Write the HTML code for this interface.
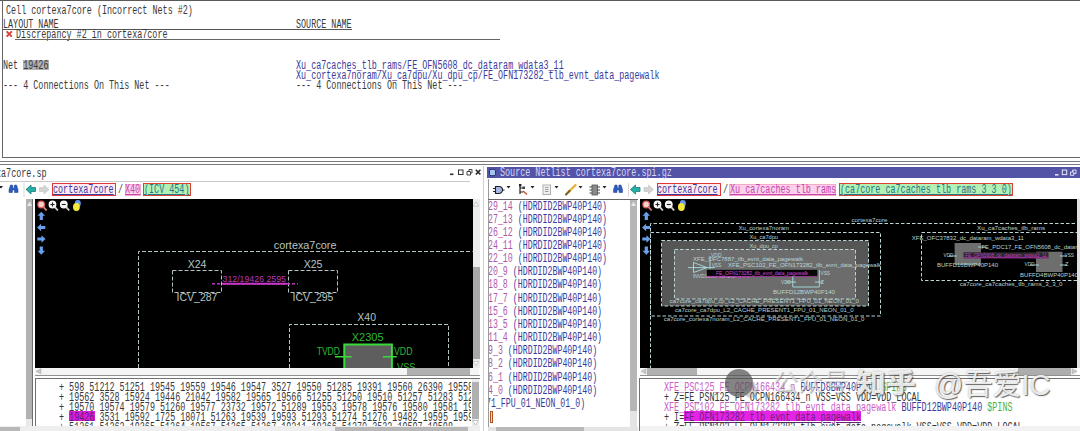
<!DOCTYPE html>
<html><head><meta charset="utf-8"><title>LVS debug</title>
<style>
html,body{margin:0;padding:0;background:#fff;}
#root{position:relative;width:1080px;height:431px;overflow:hidden;background:#fff;font-family:"Liberation Mono",monospace;}
.a{position:absolute;}
.t{position:absolute;white-space:pre;font:12px/12px "Liberation Mono",monospace;transform:scaleX(0.7014);transform-origin:0 0;color:#383838;}
.u{text-decoration:underline;}
.bl{color:#3a3a9c;}
.mg{color:#b058a8;}
.pk{color:#c860c8;}
.gn{color:#48b448;}
.ls{font-size:12.5px;transform:scaleX(0.661);}
.clip{position:absolute;overflow:hidden;}
svg{position:absolute;left:0;top:0;}
svg text{font-family:"Liberation Sans",sans-serif;}
</style></head><body>
<div id="root">
<div class="a" style="left:0px;top:0px;width:1080px;height:1px;background:#5a5a5a;"></div>
<div class="a" style="left:2px;top:0px;width:1px;height:158px;background:#666;"></div>
<div class="a" style="left:2px;top:157px;width:1078px;height:1px;background:#666;"></div>
<div class="a" style="left:0px;top:161px;width:1080px;height:1px;background:#7a7a7a;"></div>
<div class="a" style="left:0px;top:164px;width:1080px;height:1px;background:#7a7a7a;"></div>
<div class="t" style="left:6px;top:5px;">Cell cortexa7core (Incorrect Nets #2)</div>
<div class="t" style="left:3px;top:19px;">LAYOUT NAME</div>
<div class="t" style="left:296px;top:19px;">SOURCE NAME</div>
<div class="a" style="left:3px;top:28.5px;width:349px;height:1.2px;background:#555;"></div>
<div class="t" style="left:16px;top:29px;">Discrepancy #2 in cortexa7core</div>
<div class="a" style="left:15px;top:38.6px;width:485px;height:1.2px;background:#666;"></div>
<svg width="1080" height="431" viewBox="0 0 1080 431" style="pointer-events:none"><path d="M6.6 31.4 L11.8 36.6 M11.8 31.4 L6.6 36.6" stroke="#dc4040" stroke-width="2" fill="none"/></svg>
<div class="a" style="left:23px;top:59.5px;width:25.5px;height:10.5px;background:#b2b2b2;"></div>
<div class="t" style="left:3px;top:60px;">Net 19426</div>
<div class="t bl" style="left:296px;top:60px;">Xu_ca7caches_tlb_rams/FE_OFN5608_dc_dataram_wdata3_11</div>
<div class="t bl" style="left:296px;top:70px;">Xu_cortexa7noram/Xu_ca7dpu/Xu_dpu_cp/FE_OFN173282_tlb_evnt_data_pagewalk</div>
<div class="t" style="left:3px;top:80px;">--- 4 Connections On This Net ---</div>
<div class="t" style="left:296px;top:80px;">--- 4 Connections On This Net ---</div>
<div class="t" style="left:-4px;top:168px;">xa7core.sp</div>
<div class="a" style="left:0px;top:181px;width:470px;height:1px;background:#c8c8c8;"></div>
<svg width="1080" height="431" viewBox="0 0 1080 431">
<rect x="450" y="173.5" width="3.5" height="1.6" fill="#333"/>
<rect x="458.5" y="170" width="4.5" height="4.5" fill="none" stroke="#333" stroke-width="1"/>
<path d="M467 175 V171.5 H470.5 V175 Z M469 171.5 V169.5 H472 V173 H470.5" fill="none" stroke="#333" stroke-width="0.9"/>
<path d="M475.8 169.8 L480.4 174.6 M480.4 169.8 L475.8 174.6" stroke="#222" stroke-width="1.5" fill="none"/>
</svg>
<svg width="1080" height="431" viewBox="0 0 1080 431"><path d="M-1 186 h4 l-2 2.4 z" fill="#222"/></svg>
<svg width="1080" height="431" viewBox="0 0 1080 431">
<g transform="translate(8.5,0)">
<path d="M0.5 192.5 L0.5 189.5 L2 185 L4 185 L4.6 188.5 L5.4 188.5 L6 185 L8 185 L9.5 189.5 L9.5 192.5 L6 192.5 L6 190 L4 190 L4 192.5 Z" fill="#2c5cc0" stroke="#1c3c90" stroke-width="0.5"/>
<rect x="15" y="183" width="1" height="14" fill="#d8d8d8"/>
<path d="M17.5 189.5 L22.5 185 L22.5 187.5 L27 187.5 L27 191.5 L22.5 191.5 L22.5 194 Z" fill="#28b0a8" stroke="#187878" stroke-width="0.8"/>
<path d="M40.5 189.5 L35.5 185 L35.5 187.5 L31 187.5 L31 191.5 L35.5 191.5 L35.5 194 Z" fill="#d4d4d4" stroke="#c0c0c0" stroke-width="0.6"/>
</g></svg>
<div class="a" style="left:52px;top:183px;width:64px;height:13px;background:#ffeaf2;border:1.5px solid #e03838;box-sizing:border-box"></div>
<div class="t u" style="left:52.8px;top:184px;color:#3a3aa0">cortexa7core</div>
<div class="t" style="left:118px;top:184px;">/</div>
<div class="a" style="left:124.5px;top:184px;width:16.5px;height:11.5px;background:#ffd0ea;border:1px solid #f4a8cc;box-sizing:border-box"></div>
<div class="t u" style="left:125.0px;top:184px;color:#c048b0">X40</div>
<div class="a" style="left:143px;top:183px;width:48px;height:13px;background:#b4f0b4;border:1.5px solid #e04030;box-sizing:border-box"></div>
<div class="t u" style="left:144.2px;top:184px;color:#207888">(ICV_454)</div>
<div class="a" style="left:26px;top:199px;width:6px;height:220px;background:#b2b2b2;"></div>
<div class="a" style="left:26px;top:419px;width:6px;height:8px;background:#e8e8e8;"></div>
<div class="a" style="left:32px;top:199px;width:1px;height:228px;background:#707070;"></div>
<div class="a" style="left:35px;top:199px;width:437.5px;height:169px;background:#000;"></div>
<div class="a" style="left:472.5px;top:199px;width:7px;height:169px;background:#ececec;"></div>
<div class="a" style="left:472.5px;top:267px;width:7px;height:92px;background:#a8a8a8;"></div>
<div class="a" style="left:35px;top:368px;width:444px;height:6.5px;background:#f4f4f4;"></div>
<div class="a" style="left:407px;top:368px;width:63px;height:6.5px;background:#b0b0b0;"></div>
<div class="a" style="left:35px;top:375px;width:445px;height:1px;background:#909090;"></div>
<div class="a" style="left:35px;top:378px;width:445px;height:1px;background:#707070;"></div>
<div class="a" style="left:35px;top:378px;width:1px;height:49px;background:#707070;"></div>
<div class="a" style="left:471.5px;top:378.5px;width:7.5px;height:48px;background:#ececec;"></div>
<div class="a" style="left:471.5px;top:382px;width:7.5px;height:36.5px;background:#b0b0b0;"></div>
<div class="a" style="left:0px;top:426px;width:480px;height:5px;background:#eeeeee;"></div>
<div class="a" style="left:335px;top:427px;width:133px;height:4px;background:#b8b8b8;"></div>
<div class="a" style="left:0px;top:427px;width:20px;height:4px;background:#b8b8b8;"></div>
<svg width="1080" height="431" viewBox="0 0 1080 431">
<defs><clipPath id="cl"><rect x="35" y="199" width="437.5" height="169"/></clipPath><clipPath id="cr"><rect x="640" y="199" width="437" height="169"/></clipPath></defs>
<g clip-path="url(#cl)">
<circle cx="41.2" cy="204.5" r="3.3" fill="#f8d0d0" stroke="#e05858" stroke-width="1.2"/><path d="M43.6 207.1 L46.6 210.5" stroke="#e08080" stroke-width="1.8"/><circle cx="52.5" cy="204.5" r="3.3" fill="#f0f0f0" stroke="#ffffff" stroke-width="1.2"/><path d="M54.9 207.1 L57.9 210.5" stroke="#d8d8d8" stroke-width="1.8"/><path d="M50.5 204.5 h4 M52.5 202.5 v4" stroke="#222" stroke-width="1.1"/><circle cx="63.8" cy="204.5" r="3.3" fill="#f0f0f0" stroke="#ffffff" stroke-width="1.2"/><path d="M66.19999999999999 207.1 L69.19999999999999 210.5" stroke="#d8d8d8" stroke-width="1.8"/><path d="M61.8 204.5 h4" stroke="#222" stroke-width="1.1"/><ellipse cx="77.8" cy="203.5" rx="3" ry="3.4" fill="#6898f0"/><ellipse cx="76.4" cy="206.9" rx="3.4" ry="4" fill="#f4e838"/>
<path d="M41.3 211.8 l3.8 4 h-2.2 v4.2 h-3.2 v-4.2 h-2.2 z" fill="#6aa0ea"/><path d="M37.099999999999994 227.5 l4 -3.8 v2.2 h4.2 v3.2 h-4.2 v2.2 z" fill="#6aa0ea"/><path d="M45.5 239 l-4 -3.8 v2.2 h-4.2 v3.2 h4.2 v2.2 z" fill="#6aa0ea"/><path d="M41.3 254.7 l3.8 -4 h-2.2 v-4.2 h-3.2 v4.2 h-2.2 z" fill="#6aa0ea"/>
<text x="273.8" y="248.5" font-size="11" fill="#b4c4c4" textLength="62.7" lengthAdjust="spacingAndGlyphs">cortexa7core</text>
<path d="M138.5 380 V251.5 H473" fill="none" stroke="#b4c4c4" stroke-width="1" stroke-dasharray="4 2"/>
<rect x="172.5" y="270.5" width="49.0" height="22" fill="none" stroke="#b4c4c4" stroke-width="1" stroke-dasharray="4 2"/>
<text x="197.0" y="267.8" font-size="10.5" fill="#b4c4c4" text-anchor="middle">X24</text>
<text x="197.0" y="301.2" font-size="10.5" fill="#b4c4c4" text-anchor="middle">ICV_287</text>
<rect x="288.5" y="270.5" width="49.0" height="22" fill="none" stroke="#b4c4c4" stroke-width="1" stroke-dasharray="4 2"/>
<text x="313.0" y="267.8" font-size="10.5" fill="#b4c4c4" text-anchor="middle">X25</text>
<text x="313.0" y="301.2" font-size="10.5" fill="#b4c4c4" text-anchor="middle">ICV_295</text>
<path d="M212 283.7 H298" stroke="#c030c0" stroke-width="1.6" stroke-dasharray="3 2"/>
<path d="M222.5 283.7 H287" stroke="#c838c8" stroke-width="2"/>
<text x="222.5" y="282" font-size="9.5" fill="#b838b8" textLength="63.5" lengthAdjust="spacingAndGlyphs">312/19426 2595</text>
<text x="366.7" y="320.8" font-size="10.5" fill="#b4c4c4" text-anchor="middle">X40</text>
<path d="M289.5 380 V324.5 H448.5 V380" fill="none" stroke="#b4c4c4" stroke-width="1" stroke-dasharray="4 2"/>
<text x="367.7" y="341" font-size="11" fill="#34b834" text-anchor="middle">X2305</text>
<rect x="344.3" y="344.5" width="47.6" height="40" fill="#5e5e5e" stroke="#38dc38" stroke-width="2"/>
<path d="M335 356.8 H351.7 M383 356.8 H396.7" stroke="#38dc38" stroke-width="1.6"/>
<text x="316.7" y="354.5" font-size="10" fill="#34b834" textLength="23.3" lengthAdjust="spacingAndGlyphs">TVDD</text>
<text x="394" y="354.5" font-size="10" fill="#34b834" textLength="18.5" lengthAdjust="spacingAndGlyphs">VDD</text>
<text x="397" y="371.3" font-size="10" fill="#34b834" textLength="18.5" lengthAdjust="spacingAndGlyphs">VSS</text>
</g>
<path d="M473.5 206 l2.5 -4 l2.5 4 z" fill="#fff" stroke="#999" stroke-width="0.5"/>
<path d="M473.5 361.5 l2.5 4 l2.5 -4 z" fill="#fff" stroke="#999" stroke-width="0.5"/>
<path d="M27 206 l2.5 -4.5 l2.5 4.5 z" fill="#e8e8e8"/>
<path d="M27 421.5 l2.5 4.5 l2.5 -4.5 z" fill="#e8e8e8"/>
<path d="M41 368.7 l-5 2.6 l5 2.6 z" fill="#c8c8c8" stroke="#999" stroke-width="0.4"/>
<path d="M472.5 420.5 l3 4.5 l3 -4.5 z" fill="#fff" stroke="#999" stroke-width="0.5"/>
</svg>
<div class="clip" style="left:36px;top:379px;width:435px;height:46.5px">
<div class="a" style="left:33px;top:32px;width:26px;height:10px;background:#dc1cdc"></div>
<div class="t" style="left:23px;top:3px;">+ 598 51212 51251 19545 19559 19546 19547 3527 19550 51285 19391 19560 26390 19558 19561</div>
<div class="t" style="left:23px;top:13px;">+ 19562 3528 15924 19446 21042 19582 19565 19566 51255 51250 19510 51257 51283 51284</div>
<div class="t" style="left:23px;top:23px;">+ 19570 19574 19579 51260 19577 23732 19572 51289 19553 19578 19576 19580 19581 19583</div>
<div class="t" style="left:23px;top:33px;">+ <span style="color:#60206a">19426</span> 3531 19592 1725 18071 51263 19539 19593 51293 51274 51276 19482 19595 19596</div>
<div class="t" style="left:23px;top:43px;">+ 51261 51262 19365 51264 19567 51265 51267 19211 19266 51270 3532 19597 19598</div>
</div>
<div class="a" style="left:483px;top:166px;width:1px;height:265px;background:#d0d0d0;"></div>
<div class="a" style="left:486.5px;top:166.5px;width:593.5px;height:11.7px;background:#5454a6;"></div>
<div class="t" style="left:499.5px;top:167px;color:#d4d4fa">Source Netlist cortexa7core.spi.gz</div>
<div class="a" style="left:488px;top:179px;width:1px;height:252px;background:#9a9a9a;"></div>
<svg width="1080" height="431" viewBox="0 0 1080 431">
<rect x="489.5" y="169.3" width="6" height="6.4" rx="1.5" fill="#a8c4f0" stroke="#283070" stroke-width="1"/>
<g fill="#222">
<path d="M506.5 186 h4 l-2 2.4 z"/><path d="M530.5 186 h4 l-2 2.4 z"/><path d="M554.5 186 h4 l-2 2.4 z"/><path d="M578.5 186 h4 l-2 2.4 z"/><path d="M602.5 186 h4 l-2 2.4 z"/>
</g>
<!-- gate -->
<path d="M495.5 186.5 h3.5 a3.5 3.5 0 0 1 0 7 h-3.5 z" fill="#a8b8e8" stroke="#222" stroke-width="1.1"/>
<path d="M493 188.5 h2.5 M493 191.5 h2.5 M502.5 190 h2" stroke="#222" stroke-width="1"/>
<!-- hierarchy -->
<path d="M520 184.5 v9.5 M520 188 h3 M520 192 h3" stroke="#222" stroke-width="1.2" fill="none"/>
<rect x="522.5" y="186.5" width="2.5" height="2.5" fill="#444"/><path d="M523 191 l4 3.5" stroke="#d05030" stroke-width="1.5"/>
<rect x="519" y="184" width="2.4" height="2.4" fill="#222"/>
<!-- doc -->
<rect x="543" y="185" width="7.5" height="9.5" fill="#f0f0f0" stroke="#b0b0b0" stroke-width="1"/>
<path d="M545 187.5 h3.5 M545 189.5 h3.5 M545 191.5 h3.5" stroke="#888" stroke-width="0.8"/>
<!-- brush -->
<path d="M575.5 185 L569 191.5" stroke="#e8b040" stroke-width="2.4" stroke-linecap="round"/>
<path d="M569.5 191 L566 194.5" stroke="#806020" stroke-width="2.2" stroke-linecap="round"/>
<!-- chip -->
<rect x="592" y="185" width="5.5" height="10" fill="#8a8a8a" stroke="#555" stroke-width="0.8"/>
<path d="M589.5 187 h2.5 M589.5 190 h2.5 M589.5 193 h2.5 M597.5 187 h2.5 M597.5 190 h2.5 M597.5 193 h2.5" stroke="#444" stroke-width="1"/>
<!-- win controls -->
<rect x="1055" y="174" width="3.5" height="1.6" fill="#e0e0f8"/>
<rect x="1062.3" y="170" width="4.4" height="4.6" fill="none" stroke="#e8e8fc" stroke-width="1"/>
<path d="M1070.5 175.3 V172 H1073.8 V175.3 Z M1072.5 172 V170 H1076 V173.5 H1073.8" fill="none" stroke="#e8e8fc" stroke-width="0.9"/>
</svg>
<svg width="1080" height="431" viewBox="0 0 1080 431">
<g transform="translate(613,0)">
<path d="M0.5 192.5 L0.5 189.5 L2 185 L4 185 L4.6 188.5 L5.4 188.5 L6 185 L8 185 L9.5 189.5 L9.5 192.5 L6 192.5 L6 190 L4 190 L4 192.5 Z" fill="#2c5cc0" stroke="#1c3c90" stroke-width="0.5"/>
<rect x="15" y="183" width="1" height="14" fill="#d8d8d8"/>
<path d="M17.5 189.5 L22.5 185 L22.5 187.5 L27 187.5 L27 191.5 L22.5 191.5 L22.5 194 Z" fill="#28b0a8" stroke="#187878" stroke-width="0.8"/>
<path d="M40.5 189.5 L35.5 185 L35.5 187.5 L31 187.5 L31 191.5 L35.5 191.5 L35.5 194 Z" fill="#d4d4d4" stroke="#c0c0c0" stroke-width="0.6"/>
</g></svg>
<div class="a" style="left:656.5px;top:183px;width:64.5px;height:13px;background:#ffeaf2;border:1.5px solid #e03838;box-sizing:border-box"></div>
<div class="t u" style="left:657.3px;top:184px;color:#3a3aa0">cortexa7core</div>
<div class="t" style="left:722.5px;top:184px;">/</div>
<div class="a" style="left:729px;top:184px;width:107px;height:11.5px;background:#ffd0ea;border:1px solid #f4a8cc;box-sizing:border-box"></div>
<div class="t u" style="left:729.5px;top:184px;color:#c048b0">Xu_ca7caches_tlb_rams</div>
<div class="a" style="left:838.5px;top:183px;width:174px;height:13px;background:#b4f0b4;border:1.5px solid #e04030;box-sizing:border-box"></div>
<div class="t u" style="left:839.7px;top:184px;color:#207888">(ca7core_ca7caches_tlb_rams_3_3_0)</div>
<div class="a" style="left:488px;top:199px;width:150px;height:1px;background:#666;"></div>
<div class="a" style="left:630px;top:199.5px;width:7px;height:228px;background:#b6b6b6;"></div>
<div class="a" style="left:630px;top:411px;width:7px;height:16px;background:#e4e4e4;"></div>
<div class="clip" style="left:489px;top:200px;width:141px;height:227px">
<div class="t bl ls" style="left:-1.0px;top:0.5px;"><span class="mg">29_14</span> (HDRDID2BWP40P140)</div>
<div class="t bl ls" style="left:-1.0px;top:13.7px;"><span class="mg">27_13</span> (HDRDID2BWP40P140)</div>
<div class="t bl ls" style="left:-1.0px;top:26.8px;"><span class="mg">26_12</span> (HDRDID2BWP40P140)</div>
<div class="t bl ls" style="left:-1.0px;top:39.9px;"><span class="mg">24_11</span> (HDRDID2BWP40P140)</div>
<div class="t bl ls" style="left:-1.0px;top:53.1px;"><span class="mg">22_10</span> (HDRDID2BWP40P140)</div>
<div class="t bl ls" style="left:-1.0px;top:66.2px;"><span class="mg">20_9</span> (HDRDID2BWP40P140)</div>
<div class="t bl ls" style="left:-1.0px;top:79.4px;"><span class="mg">18_8</span> (HDRDID2BWP40P140)</div>
<div class="t bl ls" style="left:-1.0px;top:92.6px;"><span class="mg">17_7</span> (HDRDID2BWP40P140)</div>
<div class="t bl ls" style="left:-1.0px;top:105.7px;"><span class="mg">15_6</span> (HDRDID2BWP40P140)</div>
<div class="t bl ls" style="left:-1.0px;top:118.9px;"><span class="mg">13_5</span> (HDRDID2BWP40P140)</div>
<div class="t bl ls" style="left:-1.0px;top:132.0px;"><span class="mg">11_4</span> (HDRDID2BWP40P140)</div>
<div class="t bl ls" style="left:-1.0px;top:145.1px;"><span class="mg">9_3</span> (HDRDID2BWP40P140)</div>
<div class="t bl ls" style="left:-1.0px;top:158.3px;"><span class="mg">8_2</span> (HDRDID2BWP40P140)</div>
<div class="t bl ls" style="left:-1.0px;top:171.5px;"><span class="mg">6_1</span> (HDRDID2BWP40P140)</div>
<div class="t bl ls" style="left:-1.0px;top:184.6px;"><span class="mg">4_0</span> (HDRDID2BWP40P140)</div>
<div class="t bl ls" style="left:-2.6px;top:197.8px;">71_FPU_01_NEON_01_0)</div>
<div class="a" style="left:1px;top:211px;width:3px;height:12px;background:#f8e890;border:1px solid #b05020;box-sizing:border-box"></div>
</div>
<div class="a" style="left:488px;top:427px;width:150px;height:4px;background:#e4e4e4;"></div>
<div class="a" style="left:495.5px;top:427px;width:88px;height:4px;background:#b8b8b8;"></div>
<div class="a" style="left:640px;top:199px;width:437px;height:169px;background:#000;"></div>
<div class="a" style="left:1077px;top:199px;width:3px;height:169px;background:#e0e0e0;"></div>
<div class="a" style="left:640px;top:368px;width:437px;height:6.5px;background:#f4f4f4;"></div>
<div class="a" style="left:646.5px;top:368px;width:50px;height:6.5px;background:#b0b0b0;"></div>
<div class="a" style="left:1018px;top:368px;width:53px;height:6.5px;background:#adadad;"></div>
<div class="a" style="left:640px;top:375px;width:440px;height:1px;background:#909090;"></div>
<div class="a" style="left:639px;top:378px;width:441px;height:1px;background:#707070;"></div>
<div class="a" style="left:639px;top:378px;width:1px;height:53px;background:#707070;"></div>
<svg width="1080" height="431" viewBox="0 0 1080 431">
<g clip-path="url(#cr)">
<circle cx="646.2" cy="204.5" r="3.3" fill="#f8d0d0" stroke="#e05858" stroke-width="1.2"/><path d="M648.6 207.1 L651.6 210.5" stroke="#e08080" stroke-width="1.8"/><circle cx="657.5" cy="204.5" r="3.3" fill="#f0f0f0" stroke="#ffffff" stroke-width="1.2"/><path d="M659.9 207.1 L662.9 210.5" stroke="#d8d8d8" stroke-width="1.8"/><path d="M655.5 204.5 h4 M657.5 202.5 v4" stroke="#222" stroke-width="1.1"/><circle cx="668.8000000000001" cy="204.5" r="3.3" fill="#f0f0f0" stroke="#ffffff" stroke-width="1.2"/><path d="M671.2 207.1 L674.2 210.5" stroke="#d8d8d8" stroke-width="1.8"/><path d="M666.8000000000001 204.5 h4" stroke="#222" stroke-width="1.1"/><ellipse cx="682.8" cy="203.5" rx="3" ry="3.4" fill="#6898f0"/><ellipse cx="681.4" cy="206.9" rx="3.4" ry="4" fill="#f4e838"/>
<path d="M646.3 211.8 l3.8 4 h-2.2 v4.2 h-3.2 v-4.2 h-2.2 z" fill="#6aa0ea"/><path d="M642.0999999999999 227.5 l4 -3.8 v2.2 h4.2 v3.2 h-4.2 v2.2 z" fill="#6aa0ea"/><path d="M650.5 239 l-4 -3.8 v2.2 h-4.2 v3.2 h4.2 v2.2 z" fill="#6aa0ea"/><path d="M646.3 254.7 l3.8 -4 h-2.2 v-4.2 h-3.2 v4.2 h-2.2 z" fill="#6aa0ea"/>
<path d="M650.5 380 V223.5 H1090" fill="none" stroke="#b8d4d4" stroke-width="1" stroke-dasharray="3.5 2"/>
<text x="851.5" y="221.9" font-size="6" fill="#b8d4d4" textLength="36.1" lengthAdjust="spacingAndGlyphs">cortexa7core</text>
<rect x="650.5" y="232.5" width="230" height="83.5" fill="none" stroke="#b8d4d4" stroke-width="1" stroke-dasharray="3.5 2"/>
<text x="738.5" y="230.2" font-size="6" fill="#b8d4d4" textLength="50.5" lengthAdjust="spacingAndGlyphs">Xu_cortexa7noram</text>
<rect x="661.5" y="240.5" width="207" height="65.5" fill="#565656" stroke="#b8d4d4" stroke-width="1" stroke-dasharray="3.5 2"/>
<text x="749.5" y="239.2" font-size="6" fill="#b8d4d4" textLength="28.5" lengthAdjust="spacingAndGlyphs">Xu_ca7dpu</text>
<rect x="674.5" y="249.5" width="181" height="49.5" fill="#6c6c6c" stroke="#b8d4d4" stroke-width="1" stroke-dasharray="3.5 2"/>
<text x="749.5" y="248.2" font-size="6" fill="#b8d4d4" textLength="28.5" lengthAdjust="spacingAndGlyphs">Xu_dpu_cp</text>
<text x="693" y="260.5" font-size="6" fill="#b8d4d4" textLength="110.0" lengthAdjust="spacingAndGlyphs">XFE_OFC7887_tlb_evnt_data_pagewalk</text>
<text x="728" y="267.2" font-size="6" fill="#b8d4d4" textLength="153.0" lengthAdjust="spacingAndGlyphs">XFE_PSC102_FE_OFN173282_tlb_evnt_data_pagewalk</text>
<path d="M693.5 262.5 V272.5 L707 267.6 Z M688 267.6 H715 M710 256 V269" fill="none" stroke="#a8e0e0" stroke-width="0.9"/>
<text x="711" y="257.3" font-size="5.5" fill="#b8d4d4" textLength="10.5" lengthAdjust="spacingAndGlyphs">VDD</text>
<text x="711.7" y="266.5" font-size="5.5" fill="#b8d4d4" textLength="9.3" lengthAdjust="spacingAndGlyphs">VSS</text>
<text x="693" y="278.3" font-size="5.5" fill="#b8d4d4" textLength="42.0" lengthAdjust="spacingAndGlyphs">INVD1BWP40P140</text>
<rect x="706.8" y="269.8" width="110.5" height="6.2" fill="#050505"/>
<text x="716" y="274.9" font-size="5.3" fill="#d848d8" textLength="92.0" lengthAdjust="spacingAndGlyphs">FE_OFN173282_tlb_evnt_data_pagewalk</text>
<path d="M707 276.4 H818" stroke="#a028a0" stroke-width="0.8"/>
<path d="M706.5 277 H750" stroke="#d040d0" stroke-width="1.2" stroke-dasharray="3 1.5"/>
<path d="M792.8 276.4 V287 H819.3 V270 M786 282 H796 M815 282 H823" fill="none" stroke="#a8e0e0" stroke-width="0.9"/>
<text x="781" y="283.5" font-size="5.5" fill="#b8d4d4" textLength="10.0" lengthAdjust="spacingAndGlyphs">VDD</text>
<text x="820.5" y="274.8" font-size="5.5" fill="#b8d4d4" textLength="9.5" lengthAdjust="spacingAndGlyphs">VSS</text>
<text x="820.5" y="284.4" font-size="5.5" fill="#b8d4d4" textLength="3.5" lengthAdjust="spacingAndGlyphs">Z</text>
<text x="773" y="294.2" font-size="6" fill="#b8d4d4" textLength="62.0" lengthAdjust="spacingAndGlyphs">BUFFD12BWP40P140</text>
<text x="669.8" y="303.2" font-size="6" fill="#b8d4d4" textLength="189.2" lengthAdjust="spacingAndGlyphs">ca7core_ca7dpu_cp_L2_CACHE_PRESENT1_FPU_01_NEON_01_0</text>
<text x="675" y="311.8" font-size="6" fill="#b8d4d4" textLength="178.7" lengthAdjust="spacingAndGlyphs">ca7core_ca7dpu_L2_CACHE_PRESENT1_FPU_01_NEON_01_0</text>
<text x="663.7" y="320.8" font-size="6" fill="#b8d4d4" textLength="200.8" lengthAdjust="spacingAndGlyphs">ca7core_cortexa7noram_L2_CACHE_PRESENT1_FPU_01_NEON_01_0</text>
<path d="M1090 232.5 H921.5 V280.5 H1090" fill="none" stroke="#b8d4d4" stroke-width="1" stroke-dasharray="3.5 2"/>
<text x="977" y="229.8" font-size="6" fill="#b8d4d4" textLength="68.0" lengthAdjust="spacingAndGlyphs">Xu_ca7caches_tlb_rams</text>
<text x="911.7" y="240.2" font-size="6" fill="#b8d4d4" textLength="112.3" lengthAdjust="spacingAndGlyphs">XFE_OFC37832_dc_dataram_wdata3_11</text>
<text x="977.5" y="249.2" font-size="6" fill="#b8d4d4" textLength="139.5" lengthAdjust="spacingAndGlyphs">XFE_PDC17_FE_OFN5608_dc_dataram_wdata3_11</text>
<rect x="954.6" y="243" width="26.4" height="22" fill="#6e6e6e"/>
<rect x="1036" y="251.7" width="26.5" height="20.3" fill="#6e6e6e"/>
<rect x="963.5" y="252.3" width="85" height="6" fill="#2a2a2a"/>
<text x="965" y="256.9" font-size="5.3" fill="#c038c0" textLength="82.0" lengthAdjust="spacingAndGlyphs">FE_OFN5608_dc_dataram_wdata3_11</text>
<path d="M963.5 257.8 H1048" stroke="#c030c0" stroke-width="0.9"/>
<path d="M949 256 H957 M978 247 H986 M1030 265 H1039 M1060 256 H1067 M1060 265 H1067" fill="none" stroke="#a8e0e0" stroke-width="0.9"/>
<text x="943.5" y="257.0" font-size="5.5" fill="#b8d4d4" textLength="10.0" lengthAdjust="spacingAndGlyphs">VDD</text>
<text x="1064.5" y="257.0" font-size="5.5" fill="#b8d4d4" textLength="9.5" lengthAdjust="spacingAndGlyphs">VSS</text>
<text x="1024.5" y="266.3" font-size="5.5" fill="#b8d4d4" textLength="10.0" lengthAdjust="spacingAndGlyphs">VDD</text>
<text x="1065" y="266.3" font-size="5.5" fill="#b8d4d4" textLength="3.5" lengthAdjust="spacingAndGlyphs">Z</text>
<text x="937" y="267.4" font-size="6" fill="#b8d4d4" textLength="61.0" lengthAdjust="spacingAndGlyphs">BUFFD16BWP40P140</text>
<text x="1020" y="277.2" font-size="6" fill="#b8d4d4" textLength="58.0" lengthAdjust="spacingAndGlyphs">BUFFD4BWP40P140</text>
<text x="959.7" y="286.2" font-size="6" fill="#b8d4d4" textLength="102.8" lengthAdjust="spacingAndGlyphs">ca7core_ca7caches_tlb_rams_3_3_0</text>
</g>
<path d="M646 368.7 l-5 2.6 l5 2.6 z" fill="#c8c8c8" stroke="#999" stroke-width="0.4"/>
<path d="M1072 368.7 l5 2.6 l-5 2.6 z" fill="#c8c8c8" stroke="#999" stroke-width="0.4"/>
<path d="M631 206 l2.5 -4.5 l2.5 4.5 z" fill="#e8e8e8"/>
</svg>
<div class="clip" style="left:640px;top:379px;width:440px;height:46.5px">
<div class="t" style="left:24px;top:3px;"><span class="pk">XFE_PSC125_FE_OCPN166434_n</span> <span class="bl">BUFFD8BWP40P140</span> <span class="gn">$PINS</span></div>
<div class="t" style="left:24px;top:13px;">+ Z=FE_PSN125_FE_OCPN166434_n VSS=VSS VDD=VDD_LOCAL</div>
<div class="t" style="left:24px;top:23px;"><span class="pk">XFE_PSC102_FE_OFN173282_tlb_evnt_data_pagewalk</span> <span class="bl">BUFFD12BWP40P140</span> <span class="gn">$PINS</span></div>
<div class="a" style="left:44px;top:32px;width:177px;height:10px;background:#e424e4"></div>
<div class="t" style="left:24px;top:33px;">+ <span class="u">I</span>=<span style="color:#70207a" class="u">FE_OFN173282_tlb_evnt_data_pagewalk</span></div>
<div class="t" style="left:24px;top:43px;">+ Z=FE_PSN102_FE_OFN173282_tlb_evnt_data_pagewalk VSS=VSS VDD=VDD_LOCAL</div>
</div>
<div class="a" style="left:640px;top:426px;width:440px;height:5px;background:#f2f2f2;"></div>
<div class="a" style="left:725px;top:369px;width:28px;height:28px;border-radius:14px;background:rgba(80,80,80,0.7)"></div>
<div class="a" style="left:744px;top:384px;width:14px;height:14px;border-radius:7px;background:rgba(120,120,120,0.35)"></div>
<div class="a" style="left:773px;top:366px;font:25px/32px 'Liberation Sans','Noto Sans CJK SC',sans-serif;color:rgba(255,255,255,0.55);text-shadow:1px 1px 1px rgba(120,120,120,0.6);white-space:pre">公众号</div>
<div class="a" style="left:856px;top:367.5px;transform:scaleX(1.11);transform-origin:0 0;font:bold 27px/32px 'Liberation Sans','Noto Sans CJK SC',sans-serif;color:rgba(255,255,255,0.85);text-shadow:1px 1px 1px rgba(60,60,60,0.75),0 0 2px rgba(100,100,100,0.5);white-space:pre">知乎</div>
<div class="a" style="left:934px;top:369px;font:29px/32px 'Liberation Sans','Noto Sans CJK SC',sans-serif;color:rgba(255,255,255,0.85);text-shadow:1px 1px 1px rgba(60,60,60,0.75),0 0 2px rgba(100,100,100,0.5);white-space:pre">@吾爱IC</div>

</div>
</body></html>
